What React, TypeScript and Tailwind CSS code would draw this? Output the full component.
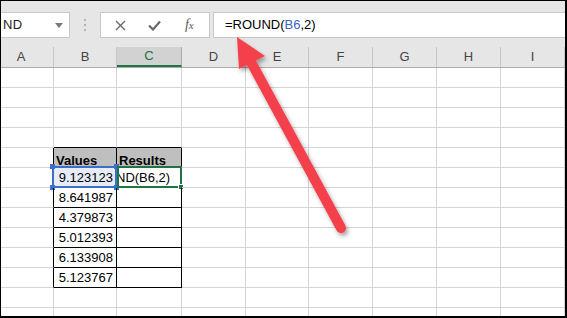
import React from "react";

const COLS = [
  { key: "A", w: "w-[53px]", pad: "pr-[12px]" },
  { key: "B", w: "w-[63px]", pad: "" },
  { key: "C", w: "w-[65px]", pad: "" },
  { key: "D", w: "w-[64px]", pad: "" },
  { key: "E", w: "w-[63px]", pad: "" },
  { key: "F", w: "w-[64px]", pad: "" },
  { key: "G", w: "w-[64px]", pad: "" },
  { key: "H", w: "w-[64px]", pad: "" },
  { key: "I", w: "w-[64px]", pad: "" },
];

const VALUES = ["9.123123", "8.641987", "4.379873", "5.012393", "6.133908", "5.123767"];

function Handle({ pos, color }: { pos: string; color: string }) {
  return <div className={`absolute w-[5px] h-[5px] ${pos} ${color}`} />;
}

function Row({ r }: { r: number }) {
  const inTable = r >= 5 && r <= 11;
  const isHead = r === 5;
  const above = r === 4;
  return (
    <div className="flex h-[20px] shrink-0">
      {COLS.map((c, i) => {
        let cls = `${c.w} shrink-0 h-full border-b border-r border-[#d4d4d4] relative`;
        if (i === 0 && inTable) cls = `${c.w} shrink-0 h-full border-b border-r border-b-[#d4d4d4] border-r-black relative`;
        if ((i === 1 || i === 2) && (inTable || above)) {
          cls = `${c.w} shrink-0 h-full border-b border-r relative ${
            inTable ? "border-r-black" : "border-r-[#d4d4d4]"
          } border-b-black`;
        }
        if ((i === 1 || i === 2) && isHead) cls += " bg-[#bfbfbf]";
        let content: React.ReactNode = null;
        if (isHead && i === 1)
          content = <span className="pl-[2px] font-bold text-[13px] text-black leading-[19px]">Values</span>;
        if (isHead && i === 2)
          content = <span className="pl-[2px] font-bold text-[13px] text-black leading-[19px]">Results</span>;
        if (r >= 6 && r <= 11 && i === 1) {
          content = (
            <div className="w-full text-right pr-[3px] text-[13px] text-black leading-[19px]">{VALUES[r - 6]}</div>
          );
        }
        if (r === 6 && i === 1) {
          cls += " bg-[#e6edf8]";
        }
        if (r === 6 && i === 2) {
          content = (
            <div className="w-full overflow-hidden whitespace-nowrap text-[13px] text-black leading-[19px]">
              <span className="ml-[-1px]">ND(B6,2)</span>
            </div>
          );
        }
        return (
          <div key={c.key} className={cls}>
            {content}
            {r === 6 && i === 1 && (
              <div className="absolute left-[-2px] top-[-2px] right-[-1px] bottom-[-1px] border-2 border-[#3d6ec9]">
                <Handle pos="left-[-4px] top-[-4px]" color="bg-[#3d6ec9]" />
                <Handle pos="right-[-4px] top-[-4px]" color="bg-[#3d6ec9]" />
                <Handle pos="left-[-4px] bottom-[-4px]" color="bg-[#3d6ec9]" />
                <Handle pos="right-[-4px] bottom-[-4px]" color="bg-[#3d6ec9]" />
              </div>
            )}
            {r === 6 && i === 2 && (
              <div className="absolute left-[0px] top-[-2px] right-[-1px] bottom-[-1px] border-2 border-[#217346]">
                <div className="absolute right-[-4px] bottom-[-4px] w-[6px] h-[6px] bg-[#217346] border border-white" />
              </div>
            )}
          </div>
        );
      })}
    </div>
  );
}

export default function App() {
  const rows = Array.from({ length: 13 }, (_, i) => i + 1);
  return (
    <div className="relative w-[567px] h-[318px] overflow-hidden bg-white border-t border-l border-r-2 border-b-2 border-black font-['Liberation_Sans',Arial,sans-serif] flex flex-col">
      {/* toolbar */}
      <div className="h-[46px] shrink-0 bg-[#e6e6e6] flex items-start pt-[11px]">
        <div className="w-[69px] h-[26px] bg-white border border-l-0 border-[#c8c8c8] flex items-center">
          <span className="pl-[2px] text-[13px] text-[#222] tracking-[0.3px]">ND</span>
          <svg className="ml-auto mr-[6px]" width="8" height="5" viewBox="0 0 8 5">
            <path d="M0 0 L8 0 L4 5 Z" fill="#7a7a7a" />
          </svg>
        </div>
        <div className="w-[30px] h-[26px] flex flex-col items-center justify-center gap-[3px]">
          <div className="w-[2px] h-[2px] bg-[#b4b4b4]" />
          <div className="w-[2px] h-[2px] bg-[#b4b4b4]" />
          <div className="w-[2px] h-[2px] bg-[#b4b4b4]" />
        </div>
        <div className="w-[110px] h-[26px] bg-white border border-[#c8c8c8] flex items-center">
          <div className="w-[40px] flex justify-center">
            <svg width="11" height="11" viewBox="0 0 11 11">
              <path d="M1 1 L10 10 M10 1 L1 10" stroke="#6a6a6a" strokeWidth="1.4" />
            </svg>
          </div>
          <div className="w-[30px] flex justify-center">
            <svg width="13" height="11" viewBox="0 0 13 11">
              <path d="M1 5.5 L5 9.5 L12 1.5" stroke="#6a6a6a" strokeWidth="2.2" fill="none" />
            </svg>
          </div>
          <div className="w-[40px] flex justify-center">
            <span className="font-['Liberation_Serif',serif] italic text-[14px] text-[#5a5a5a] leading-none">
              f<span className="text-[11px]">x</span>
            </span>
          </div>
        </div>
        <div className="ml-[3px] flex-1 h-[26px] bg-white border border-r-0 border-[#c8c8c8] flex items-center pl-[11px] text-[13px] text-black">
          <span>=ROUND(</span>
          <span className="text-[#3b63c4]">B6</span>
          <span>,2)</span>
        </div>
      </div>
      {/* column header */}
      <div className="flex h-[21px] shrink-0 bg-[#e6e6e6] border-b border-[#ababab]">
        {COLS.map((c) => (
          <div
            key={c.key}
            className={`${c.w} shrink-0 h-full flex items-center justify-center text-[13px] ${c.pad} ${
              c.key === "C"
                ? "bg-[#d2d2d2] text-[#217346] border-b-2 border-b-[#217346] border-r border-r-[#ababab]"
                : "text-[#444] border-r border-r-[#c6c6c6]"
            }`}
          >
            {c.key}
          </div>
        ))}
      </div>
      {rows.map((r) => (
        <Row key={r} r={r} />
      ))}
      {/* annotation arrow */}
      <svg className="absolute left-[-1px] top-[-1px] pointer-events-none" width="567" height="318" viewBox="0 0 567 318">
        <defs>
          <filter id="sh" x="-20%" y="-20%" width="140%" height="140%">
            <feDropShadow dx="2" dy="3" stdDeviation="2" floodColor="#000" floodOpacity="0.35" />
          </filter>
        </defs>
        <g filter="url(#sh)">
          <line x1="251" y1="62" x2="341" y2="228" stroke="#f4414c" strokeWidth="10" strokeLinecap="round" />
          <polygon points="237,37 239,69 265,56" fill="#f4414c" />
        </g>
      </svg>
    </div>
  );
}
